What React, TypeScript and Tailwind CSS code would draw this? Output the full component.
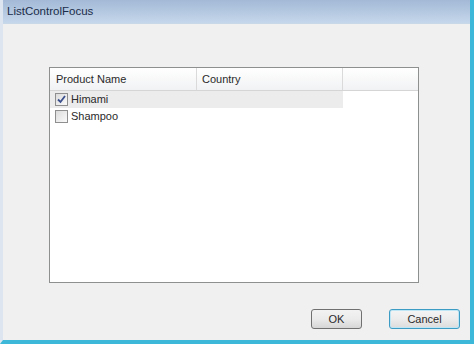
import React from "react";

function CheckBox({ checked }: { checked: boolean }) {
  return (
    <div className="w-[13px] h-[13px] border border-[#8f8f8f] bg-gradient-to-br from-[#dcdcdc] to-[#fafafa] flex items-center justify-center">
      {checked && (
        <svg width="11" height="11" viewBox="0 0 11 11">
          <path d="M2 5.5 L4.5 8 L9 2" fill="none" stroke="#3a4f8c" strokeWidth="1.8" />
        </svg>
      )}
    </div>
  );
}

export default function App() {
  return (
    <div
      className="w-[474px] h-[344px] flex flex-col bg-[#f0f0f0] border-l-[3px] border-l-[#dde6f0] border-r-4 border-r-[#3db8d9] border-b-4 border-b-[#3db8d9] text-[11px] text-[#2a2a2a]"
      style={{ fontFamily: '"Liberation Sans", Arial, sans-serif' }}
    >
      <div className="h-[24px] shrink-0 bg-gradient-to-b from-[#a3b9d6] to-[#c5d7eb] flex items-center pl-[4px] text-[11.5px] text-[#1a2c4a] border-b border-b-[#c9d8e8]">
        ListControlFocus
      </div>
      <div className="flex-1 flex flex-col">
        <div className="ml-[46px] mt-[43px] w-[370px] h-[216px] border border-[#8e8f8f] bg-white flex flex-col">
          <div className="h-[23px] flex bg-gradient-to-b from-[#ffffff] to-[#f1f2f4] border-b border-b-[#d5d5d5]">
            <div className="w-[147px] border-r border-r-[#dadada] flex items-center pl-[6px] pt-[1px]">Product Name</div>
            <div className="w-[146px] border-r border-r-[#dadada] flex items-center pl-[5px] pt-[1px]">Country</div>
            <div className="flex-1" />
          </div>
          <div className="h-[17px] w-[293px] bg-[#ececec] flex items-center pl-[5px] gap-[3px]">
            <CheckBox checked />
            <span>Himami</span>
          </div>
          <div className="h-[17px] w-[293px] flex items-center pl-[5px] gap-[3px]">
            <CheckBox checked={false} />
            <span>Shampoo</span>
          </div>
        </div>
        <div className="mt-[26px] flex justify-end pr-[10px] gap-[27px]">
          <button className="w-[51px] h-[20px] rounded-[3px] border border-[#707070] bg-gradient-to-b from-[#f2f2f2] via-[#ebebeb] to-[#d6d6d6] text-[11px]">
            OK
          </button>
          <button className="w-[71px] h-[20px] rounded-[3px] border border-[#3d9cc4] bg-gradient-to-b from-[#f4f4f4] via-[#ececec] to-[#dcdcdc] text-[11px] shadow-[inset_0_0_0_1px_#bfe6f5]">
            Cancel
          </button>
        </div>
      </div>
    </div>
  );
}
